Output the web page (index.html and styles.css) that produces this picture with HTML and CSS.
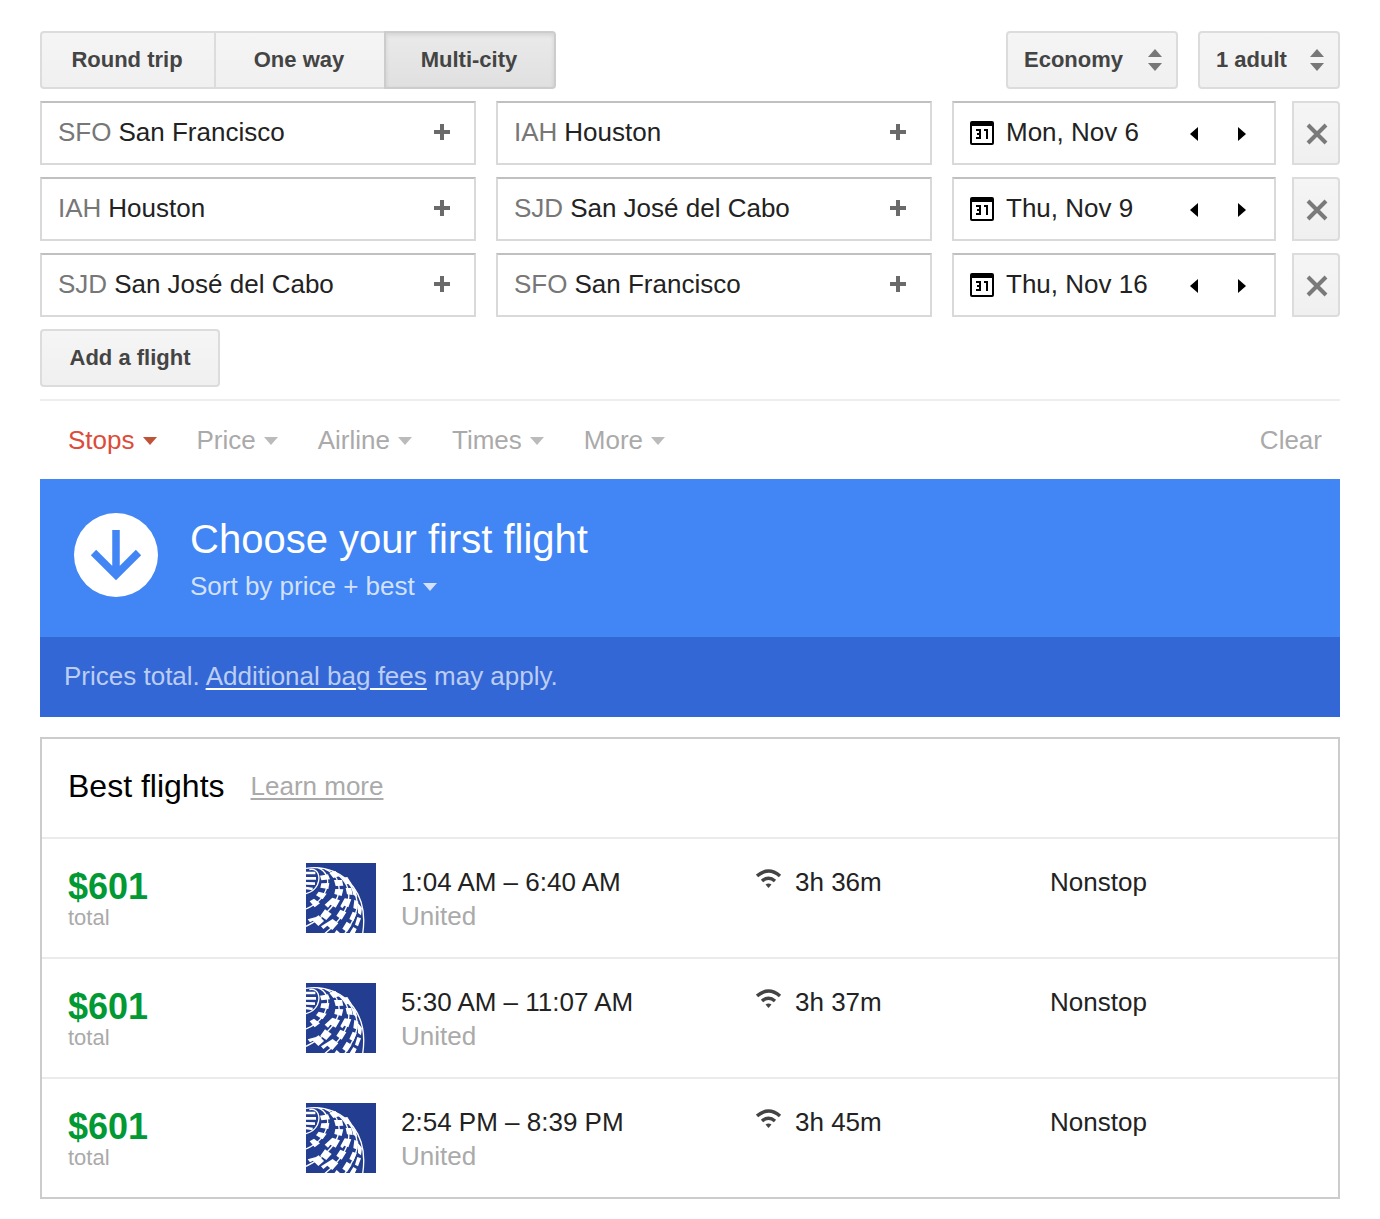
FILE: index.html
```html
<!DOCTYPE html>
<html lang="en">
<head>
<meta charset="utf-8">
<meta name="viewport" content="width=device-width, initial-scale=1">
<title>Flights</title>
<link rel="stylesheet" href="styles.css">
</head>
<body>
<svg class="defs" aria-hidden="true">
  <symbol id="plus" viewBox="0 0 16 16"><path d="M8 0v16M0 8h16" stroke="#6a6a6a" stroke-width="4"/></symbol>
  <symbol id="calendar" viewBox="0 0 24 24">
    <path fill-rule="evenodd" d="M2 0h20a2 2 0 0 1 2 2v20a2 2 0 0 1-2 2H2a2 2 0 0 1-2-2V2a2 2 0 0 1 2-2zM2 5v17h20V5z"/>
    <path d="M6 9h4v8H6M7 13h3M14 9h3v9" fill="none" stroke="#000" stroke-width="2"/>
  </symbol>
  <symbol id="left" viewBox="0 0 8 14"><path d="M8 0v14L0 7z"/></symbol>
  <symbol id="right" viewBox="0 0 8 14"><path d="M0 0v14l8-7z"/></symbol>
  <symbol id="cross" viewBox="0 0 22 22"><path d="M2 2l18 18M20 2L2 20" stroke="#7a7a7a" stroke-width="4"/></symbol>
  <symbol id="sorter" viewBox="0 0 14 22"><path d="M0 8l7-8 7 8zM0 14h14l-7 8z" fill="#777"/></symbol>
  <symbol id="caret" viewBox="0 0 14 8"><path d="M0 0h14L7 8z" fill="currentColor"/></symbol>
  <symbol id="wifi" viewBox="0 0 26 20">
    <path d="M1 7Q12.500-3 24 7M6 12Q12.500 6.500 19 12" fill="none" stroke="#444" stroke-width="3.500"/>
    <path d="M9.500 15.500Q12.500 13.500 15.500 15.500L12.500 19z" fill="#444"/>
  </symbol>
  <symbol id="globe" viewBox="0 0 210 210">
    <path fill="#233e90" d="M0 0h210v210H0z"/>
    <g fill="none" stroke="#fff">
      <path stroke-width="4" d="M0 16C60 6 112 32 142 72C172 112 178 160 170 212M10 20C38 14 44 44 34 66C27 80 14 88 0 92M34 14C62 24 70 48 62 74C54 104 28 126 0 138M56 18C88 30 104 56 98 90C90 130 48 166 0 190M78 24C116 46 134 74 127 112C120 150 88 186 56 212M104 38C142 68 158 104 152 140C147 168 132 190 116 212"/>
      <path stroke-width="8" d="M0 30h28M0 46h30M0 61l27 1M0 75l20 3"/>
      <path d="M42 38l24-4 6 15-26 3zM46 61l24-1-3 18-24-4zM38 86l24 6-12 17-20-12zM24 107l18 14-16 12-15-18z" fill="#fff" stroke="none"/>
      <path d="M70 30l18-6 14 15-20 6zM84 51l24 0 4 17-23 1zM88 78l24 1-5 20-22-6zM79 104l23 8-13 22-16-9-7 9-10-9zM57 139l20 14-16 18-18-13zM30 162l8-5 16 17-17 15-16-16-9 5-7-9z" fill="#fff" stroke="none"/>
      <path d="M108 44l16-2 13 20-16 2zM119 75l17 0 4 21-17-2zM116 106l20 3-9 24-12-5-6 8-6-6zM103 140l18 8-14 22-16-12zM80 168l17 13-18 20-15-13-12 10-7-8z" fill="#fff" stroke="none"/>
      <path d="M136 74l12 6 6 22-12-6zM145 110l12 6-3 24-12-5zM140 146l12 5-10 24-12-7zM122 176l15 9-14 22-14-10zM92 201l12 11H84zM156 120l12 15-3 22-9-7zM154 162l11 4-9 24-9-5zM142 192l10 6-6 14h-16z" fill="#fff" stroke="none"/>
    </g>
  </symbol>
</svg>
<main class="page">
  <form class="search">
    <div class="toolbar">
      <div class="segments">
        <button type="button" class="btn segment">Round trip</button>
        <button type="button" class="btn segment">One way</button>
        <button type="button" class="btn segment is-active" aria-pressed="true">Multi-city</button>
      </div>
      <div class="picker picker-cabin">
        <select class="btn" aria-label="Cabin"><option>Economy</option></select>
        <svg class="sorter" aria-hidden="true"><use href="#sorter"/></svg>
      </div>
      <div class="picker picker-guests">
        <select class="btn" aria-label="Passengers"><option>1 adult</option></select>
        <svg class="sorter" aria-hidden="true"><use href="#sorter"/></svg>
      </div>
    </div>

    <div class="leg">
      <div class="field"><label for="from1">SFO</label><input id="from1" value="San Francisco"><button type="button" class="bare" aria-label="Add origin"><svg class="plus"><use href="#plus"/></svg></button></div>
      <div class="field"><label for="to1">IAH</label><input id="to1" value="Houston"><button type="button" class="bare" aria-label="Add destination"><svg class="plus"><use href="#plus"/></svg></button></div>
      <div class="when">
        <div class="field date"><label for="date1" aria-label="Date"><svg class="calendar"><use href="#calendar"/></svg></label><input id="date1" value="Mon, Nov 6"><button type="button" class="bare step" aria-label="Previous day"><svg class="arrow"><use href="#left"/></svg></button><button type="button" class="bare step" aria-label="Next day"><svg class="arrow"><use href="#right"/></svg></button></div>
        <button type="button" class="btn remove" aria-label="Remove flight"><svg class="cross"><use href="#cross"/></svg></button>
      </div>
    </div>
    <div class="leg">
      <div class="field"><label for="from2">IAH</label><input id="from2" value="Houston"><button type="button" class="bare" aria-label="Add origin"><svg class="plus"><use href="#plus"/></svg></button></div>
      <div class="field"><label for="to2">SJD</label><input id="to2" value="San José del Cabo"><button type="button" class="bare" aria-label="Add destination"><svg class="plus"><use href="#plus"/></svg></button></div>
      <div class="when">
        <div class="field date"><label for="date2" aria-label="Date"><svg class="calendar"><use href="#calendar"/></svg></label><input id="date2" value="Thu, Nov 9"><button type="button" class="bare step" aria-label="Previous day"><svg class="arrow"><use href="#left"/></svg></button><button type="button" class="bare step" aria-label="Next day"><svg class="arrow"><use href="#right"/></svg></button></div>
        <button type="button" class="btn remove" aria-label="Remove flight"><svg class="cross"><use href="#cross"/></svg></button>
      </div>
    </div>
    <div class="leg">
      <div class="field"><label for="from3">SJD</label><input id="from3" value="San José del Cabo"><button type="button" class="bare" aria-label="Add origin"><svg class="plus"><use href="#plus"/></svg></button></div>
      <div class="field"><label for="to3">SFO</label><input id="to3" value="San Francisco"><button type="button" class="bare" aria-label="Add destination"><svg class="plus"><use href="#plus"/></svg></button></div>
      <div class="when">
        <div class="field date"><label for="date3" aria-label="Date"><svg class="calendar"><use href="#calendar"/></svg></label><input id="date3" value="Thu, Nov 16"><button type="button" class="bare step" aria-label="Previous day"><svg class="arrow"><use href="#left"/></svg></button><button type="button" class="bare step" aria-label="Next day"><svg class="arrow"><use href="#right"/></svg></button></div>
        <button type="button" class="btn remove" aria-label="Remove flight"><svg class="cross"><use href="#cross"/></svg></button>
      </div>
    </div>
    <button type="button" class="btn add">Add a flight</button>
  </form>

  <div class="filters">
    <button type="button" class="bare filter is-set">Stops<svg class="caret"><use href="#caret"/></svg></button>
    <button type="button" class="bare filter">Price<svg class="caret"><use href="#caret"/></svg></button>
    <button type="button" class="bare filter">Airline<svg class="caret"><use href="#caret"/></svg></button>
    <button type="button" class="bare filter">Times<svg class="caret"><use href="#caret"/></svg></button>
    <button type="button" class="bare filter">More<svg class="caret"><use href="#caret"/></svg></button>
    <button type="button" class="bare filter clear">Clear</button>
  </div>

  <section class="banner">
    <div class="banner-main">
      <svg class="badge" viewBox="0 0 84 84" aria-hidden="true"><circle cx="42" cy="42" r="42" fill="#fff"/><path d="M42 17v44M19.500 39.500L42 62l22.500-22.500" fill="none" stroke="#4285f4" stroke-width="7.500"/></svg>
      <div>
        <h1>Choose your first flight</h1>
        <button type="button" class="bare sort">Sort by price + best<svg class="caret"><use href="#caret"/></svg></button>
      </div>
    </div>
    <p class="banner-note">Prices total. <a href="#fees">Additional bag fees</a> may apply.</p>
  </section>

  <section class="results">
    <header class="results-head">
      <h2>Best flights</h2>
      <a href="#learn">Learn more</a>
    </header>
    <ul class="flights">
      <li class="flight">
        <div class="price"><strong>$601</strong><small>total</small></div>
        <svg class="logo" role="img" aria-label="United"><use href="#globe"/></svg>
        <div class="times">1:04 AM – 6:40 AM<span>United</span></div>
        <div class="duration"><svg class="wifi" aria-hidden="true"><use href="#wifi"/></svg>3h 36m</div>
        <div>Nonstop</div>
      </li>
      <li class="flight">
        <div class="price"><strong>$601</strong><small>total</small></div>
        <svg class="logo" role="img" aria-label="United"><use href="#globe"/></svg>
        <div class="times">5:30 AM – 11:07 AM<span>United</span></div>
        <div class="duration"><svg class="wifi" aria-hidden="true"><use href="#wifi"/></svg>3h 37m</div>
        <div>Nonstop</div>
      </li>
      <li class="flight">
        <div class="price"><strong>$601</strong><small>total</small></div>
        <svg class="logo" role="img" aria-label="United"><use href="#globe"/></svg>
        <div class="times">2:54 PM – 8:39 PM<span>United</span></div>
        <div class="duration"><svg class="wifi" aria-hidden="true"><use href="#wifi"/></svg>3h 45m</div>
        <div>Nonstop</div>
      </li>
    </ul>
  </section>
</main>
</body>
</html>
```
FILE: styles.css
```css
* { box-sizing: border-box; }
body { margin: 0; background: #fff; color: #222; font: 26px/34px "Liberation Sans", Arial, sans-serif; }
button, input, select { font: inherit; color: inherit; margin: 0; }
h1, h2, p, ul { margin: 0; padding: 0; font-weight: normal; }
svg { display: block; flex: none; }
.defs { display: none; }
.page { padding: 31px 40px 20px; }

.btn {
  height: 58px; padding: 0; border: 2px solid #dcdcdc; border-radius: 4px;
  background: linear-gradient(#f5f5f5, #f0f0f0);
  color: #444; font-size: 22px; font-weight: bold; cursor: pointer;
}
.bare { display: flex; align-items: center; padding: 0; border: 0; background: none; cursor: pointer; }

.search { display: flex; flex-direction: column; gap: 12px; padding-bottom: 12px; border-bottom: 2px solid #eee; }
.toolbar { display: flex; gap: 20px; }
.segments { display: flex; margin-right: auto; }
.segment { width: 172px; padding-right: 2px; border-radius: 0; }
.segment:first-child { width: 176px; border-radius: 4px 0 0 4px; }
.segment + .segment { margin-left: -2px; }
.segment.is-active {
  border-color: #ccc; border-radius: 0 4px 4px 0;
  background: linear-gradient(#eaeaea, #e0e0e0); box-shadow: inset 0 2px 4px rgba(0, 0, 0, .1);
}
.picker { display: grid; align-items: center; }
.picker > * { grid-area: 1 / 1; }
.picker select { width: 100%; padding-left: 16px; appearance: none; }
.picker-cabin { width: 172px; }
.picker-guests { width: 142px; }
.sorter { width: 14px; height: 22px; margin-right: 16px; justify-self: end; pointer-events: none; }

.leg { display: grid; grid-template-columns: 1fr 1fr 388px; gap: 20px; }
.when { display: flex; gap: 16px; }
.field {
  display: flex; align-items: center; gap: 7px; min-width: 0; height: 64px; padding: 0 24px 2px 16px;
  border: 2px solid #d9d9d9; border-top-color: #c0c0c0;
}
.field label { color: #777; }
.field input { flex: 1; width: 0; min-width: 0; height: 34px; padding: 0; border: 0; background: none; outline: 0; }
.date { flex: 1; gap: 12px; padding-right: 14px; }
.step { width: 36px; height: 34px; padding-top: 4px; justify-content: center; }
.plus { width: 16px; height: 16px; }
.calendar { width: 24px; height: 24px; margin-top: 2px; }
.arrow { width: 8px; height: 14px; }
.cross { width: 22px; height: 22px; }
.remove { display: flex; align-items: center; justify-content: center; width: 48px; height: 64px; padding: 2px 0 0 2px; border-radius: 0 4px 4px 0; }
.add { width: 180px; }

.filters { display: flex; gap: 40px; padding: 22px 18px 22px 28px; }
.filter { gap: 8px; color: #aaa; }
.filter .caret { color: #bbb; }
.filter.is-set { color: #dd4b39; }
.filter.is-set .caret { color: #be5338; }
.clear { margin-left: auto; }
.caret { width: 14px; height: 8px; margin-top: 2px; }

.banner-main { display: flex; gap: 32px; padding: 34px; background: #4285f4; color: #fff; }
.badge { width: 84px; height: 84px; }
.banner h1 { font-size: 40px; line-height: 52px; }
.sort { gap: 8px; margin-top: 4px; color: #d3e1fb; }
.banner-note { padding: 22px 24px 24px; background: #3367d6; color: #bbcdf2; }
.banner-note a { color: inherit; text-decoration-color: #fff; }

.results { margin-top: 20px; border: 2px solid #ccc; }
.results-head { display: flex; align-items: center; gap: 26px; padding: 30px 26px 34px; }
.results h2 { color: #000; font-size: 32px; }
.results-head a { color: #aaa; }
a { text-decoration-thickness: 2px; text-underline-offset: 3px; }
.flights { list-style: none; }
.flight {
  display: grid; grid-template-columns: 238px 95px 355fr 294fr 262fr;
  padding: 24px 26px; border-top: 2px solid #ebebeb;
}
.flight > div { margin-top: 2px; }
.logo { width: 70px; height: 70px; }
.price { display: flex; flex-direction: column; }
.price strong { color: #093; font-size: 36px; line-height: 44px; }
.price small { color: #aaa; font-size: 22px; line-height: 18px; }
.times span { display: block; color: #aaa; }
.duration { display: flex; gap: 13px; }
.wifi { width: 26px; height: 20px; margin-top: 4px; }
```
